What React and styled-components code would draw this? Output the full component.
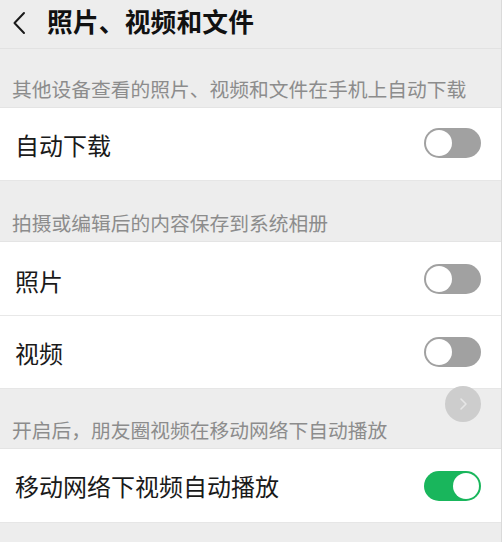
import React, { useState } from "react";
import styled, { createGlobalStyle } from "styled-components";

const Global = createGlobalStyle`
  html, body { margin: 0; padding: 0; background: #ededed; }
  * { box-sizing: border-box; }
  body { font-family: "Noto Sans CJK SC", "Noto Sans", sans-serif; }
`;

const Page = styled.div`
  position: relative;
  width: 502px;
  min-height: 542px;
  background: #ededed;
  border-right: 1px solid #dadada;
  overflow: hidden;
`;

const Header = styled.header`
  height: 49px;
  display: flex;
  align-items: center;
  padding-left: 12px;
  gap: 20px;
  background: #ededed;
  border-bottom: 1px solid #e2e2e2;
`;

const BackIcon = styled.svg`
  width: 15px;
  height: 24px;
  margin-top: -3px;
  flex: none;
`;

const Title = styled.h1`
  margin: 0;
  margin-top: -7px;
  font-size: 25.7px;
  font-weight: 700;
  color: #111;
  line-height: 34px;
  letter-spacing: 0.2px;
`;

const Caption = styled.div`
  height: ${(p) => p.$h}px;
  display: flex;
  align-items: flex-end;
  padding: 0 0 ${(p) => p.$pb}px 12px;
  font-size: 19.75px;
  line-height: 27px;
  color: #8c8c8c;
  border-bottom: 1px solid #e4e4e4;
`;

const Group = styled.section`
  background: #fff;
  border-bottom: 1px solid #e6e6e6;
`;

const Row = styled.div`
  position: relative;
  height: ${(p) => p.$h || 73}px;
  display: flex;
  align-items: center;
  justify-content: space-between;
  padding: 0 20px 0 15px;
  & + & {
    border-top: 1px solid #e8e8e8;
  }
`;

const Label = styled.span`
  font-size: 24px;
  color: #1a1a1a;
  line-height: 32px;
  margin-top: ${(p) => p.$mt || 0}px;
`;

const Track = styled.button`
  position: relative;
  width: 57px;
  height: 30px;
  border-radius: 15px;
  border: none;
  padding: 0;
  cursor: pointer;
  background: ${(p) => (p.$on ? "#19b65c" : "#a1a1a1")};
  flex: none;
  margin-top: ${(p) => p.$mt || 0}px;
`;

const Knob = styled.span`
  position: absolute;
  top: 2px;
  left: ${(p) => (p.$on ? "29px" : "2px")};
  width: 26px;
  height: 26px;
  border-radius: 50%;
  background: #fff;
`;

const FloatBtn = styled.div`
  position: absolute;
  left: 445px;
  top: 386px;
  width: 36px;
  height: 36px;
  border-radius: 50%;
  background: #cdcdcd;
  display: flex;
  align-items: center;
  justify-content: center;
`;

const Spacer = styled.div`
  height: 40px;
`;

function Toggle({ on, mt }) {
  const [v, setV] = useState(on);
  return (
    <Track $on={v} $mt={mt} onClick={() => setV(!v)} aria-pressed={v}>
      <Knob $on={v} />
    </Track>
  );
}

export default function App() {
  return (
    <>
      <Global />
      <Page>
        <Header>
          <BackIcon viewBox="0 0 15 24">
            <polyline
              points="12,2 2.5,12 12,22"
              fill="none"
              stroke="#1a1a1a"
              strokeWidth="2"
              strokeLinecap="round"
              strokeLinejoin="round"
            />
          </BackIcon>
          <Title>照片、视频和文件</Title>
        </Header>

        <Caption $h={59} $pb={5}>其他设备查看的照片、视频和文件在手机上自动下载</Caption>
        <Group>
          <Row $h={72}>
            <Label $mt={2}>自动下载</Label>
            <Toggle on={false} mt={-2} />
          </Row>
        </Group>

        <Caption $h={61} $pb={5}>拍摄或编辑后的内容保存到系统相册</Caption>
        <Group>
          <Row>
            <Label $mt={4}>照片</Label>
            <Toggle on={false} />
          </Row>
          <Row>
            <Label $mt={2}>视频</Label>
            <Toggle on={false} />
          </Row>
        </Group>

        <Caption $h={60} $pb={5}>开启后，朋友圈视频在移动网络下自动播放</Caption>
        <Group>
          <Row>
            <Label $mt={1}>移动网络下视频自动播放</Label>
            <Toggle on={true} />
          </Row>
        </Group>
        <Spacer />

        <FloatBtn>
          <svg width="12" height="16" viewBox="0 0 12 16">
            <polyline
              points="4,3 9,8 4,13"
              fill="none"
              stroke="#e6e6e6"
              strokeWidth="1.6"
              strokeLinecap="round"
              strokeLinejoin="round"
            />
          </svg>
        </FloatBtn>
      </Page>
    </>
  );
}
